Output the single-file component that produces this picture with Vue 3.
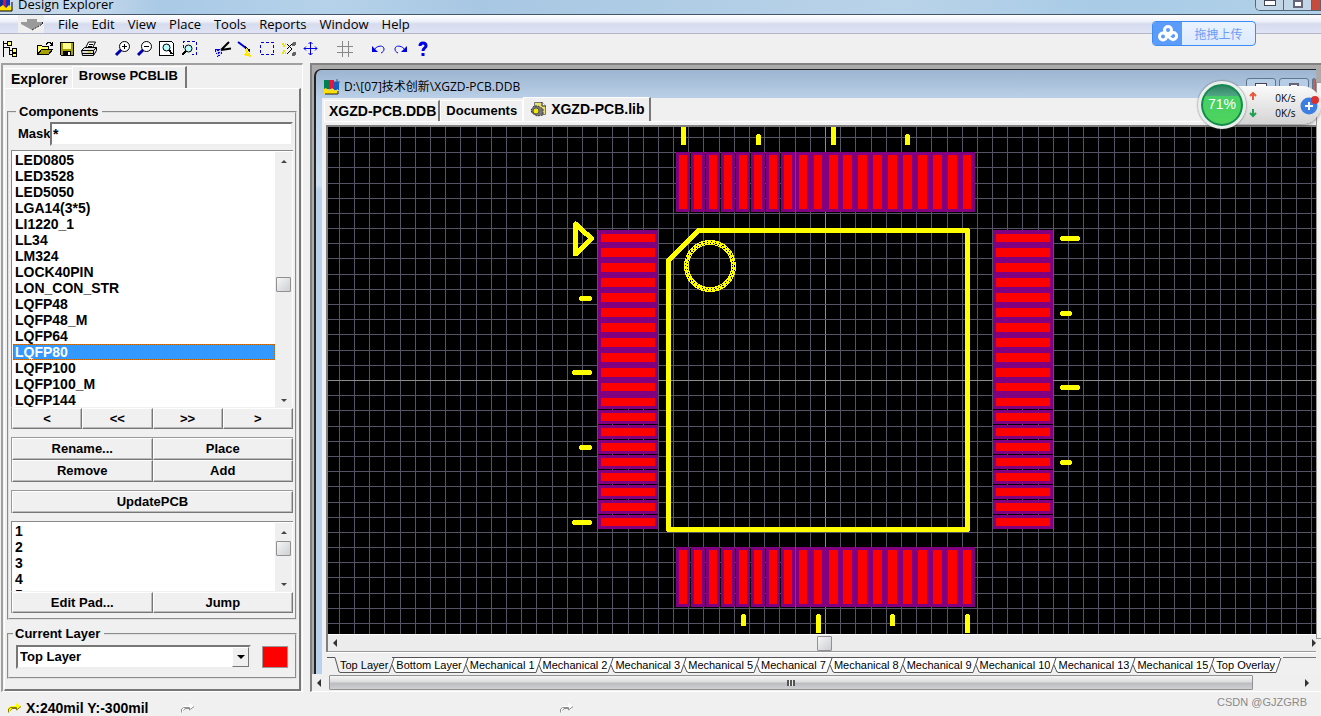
<script setup>
import { ref } from 'vue'

const menus = ['File', 'Edit', 'View', 'Place', 'Tools', 'Reports', 'Window', 'Help']
const toolGroups = [
  ['tree'],
  ['open', 'save', 'print'],
  ['zoomin', 'zoomout', 'zoompage', 'zoomarea'],
  ['cut', 'wire', 'select', 'break', 'move'],
  ['grid'],
  ['undo', 'redo', 'help'],
]
const components = [
  'LED0805', 'LED3528', 'LED5050', 'LGA14(3*5)', 'LI1220_1', 'LL34', 'LM324', 'LOCK40PIN',
  'LON_CON_STR', 'LQFP48', 'LQFP48_M', 'LQFP64', 'LQFP80', 'LQFP100', 'LQFP100_M', 'LQFP144',
]
const selected = ref('LQFP80')
const mask = ref('*')
const pads = ['1', '2', '3', '4', '5']
const layers = [
  'Top Layer', 'Bottom Layer', 'Mechanical 1', 'Mechanical 2', 'Mechanical 3', 'Mechanical 5',
  'Mechanical 7', 'Mechanical 8', 'Mechanical 9', 'Mechanical 10', 'Mechanical 13',
  'Mechanical 15', 'Top Overlay',
]
const layer = ref('Top Layer')

const range = (a, b) => Array.from({ length: b - a + 1 }, (_, i) => a + i)
const gridX = range(-32, 32).map((k) => Math.round(825 + k * 15.19))
const gridY = range(-16, 16).map((k) => Math.round(380 + k * 15.19))
const columnPads = range(0, 19).map((i) => ({ x: Math.round(679 + 14.95 * i), w: i < 8 ? 14 : i < 19 ? 16 : 15 }))
const rowPads = range(0, 19).map((i) => ({
  y: Math.floor(234 + 14.95 * i),
  h: i > 0 && i < 10 ? 9 : 8,
  top: i === 0 ? 4 : 3,
  full: i < 11 ? 17 : 14,
}))
const ticks = [
  [683.5, 124, 683.5, 143], [758.5, 136.5, 758.5, 143], [833.5, 124, 833.5, 143], [907.5, 136.5, 907.5, 143],
  [743.5, 616.5, 743.5, 624], [818.5, 616.5, 818.5, 631], [892.5, 616.5, 892.5, 624], [967.5, 616.5, 967.5, 631],
  [581.5, 298.5, 589.5, 298.5], [574.5, 372.5, 589.5, 372.5], [581.5, 447.5, 589.5, 447.5], [574.5, 522.5, 589.5, 522.5],
  [1062.5, 238.5, 1077.5, 238.5], [1062.5, 313.5, 1069.5, 313.5], [1062.5, 387.5, 1077.5, 387.5], [1062.5, 462.5, 1069.5, 462.5],
]
</script>

<template>
  <div class="app">
    <header class="titlebar">
      <svg class="app-icon" width="13" height="12" viewBox="0 0 13 12">
        <path d="M0 0h3v8H0z" fill="#083090" /><path d="M3 0h3v8H3z" fill="#e01030" /><path d="M6 0h4v8H6z" fill="#1030c0" />
        <path d="M0 7l3-2 3 3 3-3 3 3v3H0z" fill="#ffe000" /><path d="M0 11h12V2" fill="none" stroke="#000" />
      </svg>
      <span class="app-title">Design Explorer</span>
      <div class="win-buttons">
        <button aria-label="Minimize"><i class="min"></i></button>
        <button aria-label="Restore"><i class="max"></i></button>
        <button class="close" aria-label="Close"></button>
      </div>
    </header>

    <nav class="menubar">
      <button class="sys" aria-label="System menu">
        <svg width="26" height="18" viewBox="0 0 26 18">
          <path d="M9 4h10v3h5v2l-10 6L3 9V7h6z" fill="#9a9a9a" />
          <path d="M24.500 7v2L14 15" fill="none" stroke="#222" stroke-dasharray="2 1" />
        </svg>
      </button>
      <button v-for="m in menus" :key="m">{{ m }}</button>
    </nav>

    <div class="toolbar">
      <div v-for="(g, gi) in toolGroups" :key="gi" class="tool-group">
        <button v-for="t in g" :key="t" :aria-label="t">
          <svg width="18" height="18" viewBox="0 0 18 18" fill="none" stroke="#000" shape-rendering="crispEdges">
            <template v-if="t === 'tree'">
              <path d="M1.500 1v16M2 3.500h4M2 7.500h6M7.500 8v6h3M7.500 10.500h2" />
              <path d="M5.500 1.500h4v4h-4zM10.500 8.500h4v4h-4zM10.500 13.500h4v3h-4z" fill="#ffff70" />
            </template>
            <template v-else-if="t === 'open'">
              <path d="M1.500 14.500v-9h4l1 1h6v3" fill="#ffff70" /><path d="M1.500 14.500l4-5h11l-4 5z" fill="#a8a000" />
              <path d="M10 4.500l2-2h2l2 2M16.500 2v3h-3" />
            </template>
            <template v-else-if="t === 'save'">
              <path d="M2.500 2.500h13v13h-12l-1-1z" fill="#a8a000" /><path d="M5 3h8v6H5z" fill="#ffff90" stroke="none" />
              <path d="M5 11h8v5H5z" fill="#000" stroke="none" /><path d="M10 12h2v3h-2z" fill="#fff" stroke="none" />
            </template>
            <g v-else-if="t === 'print'" shape-rendering="auto">
              <path d="M5.500 8l3-6h7l-3 6z" fill="#fff" /><path d="M9 4.500h4M8 6.500h4" />
              <path d="M1.500 10.500l3-3h12v3l-3 5h-11z" fill="#ddd" /><path d="M1.500 10.500h12v4.500M13.500 10.500l3-3M2 13.500h11" />
              <path d="M8 12h3" stroke="#c8c000" />
            </g>
            <template v-else-if="t === 'zoomin' || t === 'zoomout'">
              <circle cx="10.500" cy="6.500" r="5" fill="#fff" shape-rendering="auto" /><path d="M8 6.500h5" />
              <path v-if="t === 'zoomin'" d="M10.500 4v5" /><path d="M7 10l-5 5" stroke="#0000b0" stroke-width="3" shape-rendering="auto" />
            </template>
            <template v-else-if="t === 'zoompage'">
              <path d="M1.500 1.500h12l2 2v12h-14z" fill="#fff" /><circle cx="8.500" cy="7.500" r="3.500" fill="#bff" shape-rendering="auto" />
              <path d="M11 10l3 4" stroke-width="2" />
            </template>
            <template v-else-if="t === 'zoomarea'">
              <path d="M3.500 8V1.500h13v13H12" stroke="#0000d0" stroke-dasharray="3 2" />
              <circle cx="8.500" cy="8.500" r="3.500" fill="#bff" shape-rendering="auto" /><path d="M6 11l-4 4" stroke-width="2" />
            </template>
            <template v-else-if="t === 'cut'">
              <path d="M7 10l10-1.500M7 10l8-8" stroke-width="2" shape-rendering="auto" />
              <path d="M1 9l7 1-1 4-3 3zM3 9l3 5M5 9l-1 7" fill="#ccf" stroke="#0000e0" stroke-dasharray="2 1" />
            </template>
            <template v-else-if="t === 'wire'">
              <path d="M2 2l8 6" stroke="#0000d0" stroke-width="2" shape-rendering="auto" /><path d="M9 7l5 4" stroke-width="2" />
              <path d="M11 9l-2 2M12 11l-3 4M9 15h5M13 13l1 4" stroke="#ffe800" stroke-width="2" />
            </template>
            <path v-else-if="t === 'select'" d="M2.500 2.500h13v12h-13z" stroke="#0000e0" stroke-dasharray="3 2" />
            <template v-else-if="t === 'break'">
              <path d="M7 4l5 5-5 5M12 4l-5 5" shape-rendering="auto" />
              <path d="M2 4h4M3 6h3M2 13h4M3 11h3" stroke="#f0e000" stroke-width="2" stroke-dasharray="2 1" />
              <circle cx="14" cy="4" r="2" fill="#666" stroke="none" /><circle cx="14" cy="14" r="2" fill="#666" stroke="none" />
            </template>
            <g v-else-if="t === 'move'" stroke="#0000e8" shape-rendering="auto">
              <path d="M8.500 2v13M2 8.500h13M6.500 4l2-2 2 2M6.500 13l2 2 2-2M4 6.500l-2 2 2 2M13 6.500l2 2-2 2" />
            </g>
            <path v-else-if="t === 'grid'" d="M6.500 1v16M12.500 1v16M1 6.500h16M1 12.500h16" stroke="#888" />
            <g v-else-if="t === 'undo'" stroke="#0000e8" shape-rendering="auto">
              <path d="M4 10c3-5 10-5 10-1 0 2-1 3-3 4" /><path d="M2 6v6h6z" fill="#0000e8" stroke="none" />
            </g>
            <g v-else-if="t === 'redo'" stroke="#0000e8" shape-rendering="auto">
              <path d="M13 10c-3-5-10-5-10-1 0 2 1 3 3 4" /><path d="M15 6v6H9z" fill="#0000e8" stroke="none" />
            </g>
            <g v-else shape-rendering="auto" stroke="#0000e8">
              <path d="M6 6c0-4 6-4 6 0 0 2-3 2-3 5" stroke-width="3" /><path d="M9 13v3" stroke-width="3" />
            </g>
          </svg>
        </button>
      </div>
    </div>

    <main class="main">
      <aside class="panel">
        <div class="panel-tabs" role="tablist">
          <button role="tab">Explorer</button>
          <button role="tab" class="active" aria-selected="true">Browse PCBLIB</button>
        </div>
        <div class="page">
          <fieldset class="components">
            <legend>Components</legend>
            <div class="mask-row">
              <label for="mask">Mask</label>
              <input id="mask" v-model="mask" type="text" />
            </div>
            <div class="listbox grow">
              <ul role="listbox" aria-label="Components">
                <li v-for="c in components" :key="c" role="option" :aria-selected="c === selected" :class="{ sel: c === selected }" @click="selected = c">{{ c }}</li>
              </ul>
              <div class="vscroll"><i class="up"></i><span class="gap-a"></span><b></b><span class="gap-b"></span><i class="down"></i></div>
            </div>
            <div class="row tight"><button>&lt;</button><button>&lt;&lt;</button><button>&gt;&gt;</button><button>&gt;</button></div>
            <div class="row two"><button>Rename...</button><button>Place</button><button>Remove</button><button>Add</button></div>
            <div class="row one"><button>UpdatePCB</button></div>
            <div class="listbox short">
              <ul role="listbox" aria-label="Pads"><li v-for="p in pads" :key="p" role="option">{{ p }}</li></ul>
              <div class="vscroll"><i class="up"></i><b></b><span class="gap-b"></span><i class="down"></i></div>
            </div>
            <div class="row two tight"><button>Edit Pad...</button><button>Jump</button></div>
          </fieldset>
          <fieldset class="current">
            <legend>Current Layer</legend>
            <div class="layer-row">
              <div class="combo">
                <select v-model="layer" aria-label="Current Layer"><option v-for="l in layers" :key="l">{{ l }}</option></select>
                <span class="drop"><i></i></span>
              </div>
              <button class="swatch" aria-label="Layer colour"></button>
            </div>
          </fieldset>
        </div>
      </aside>

      <section class="mdi">
        <div class="mdi-row">
          <div class="child">
            <div class="child-title">
              <svg width="16" height="16" viewBox="0 0 16 16">
                <path d="M0 1h5v9H0z" fill="#008050" /><path d="M5 1h5v9H5z" fill="#f01040" /><path d="M10 3h5v8h-5z" fill="#1060c0" />
                <path d="M0 10l2-1 3 3 3-3 3 3 3-2v5H0z" fill="#ffe000" /><path d="M1 15h13v-3" fill="none" stroke="#222" />
                <path d="M13 0v6M10 3h6" stroke="#2060a0" />
              </svg>
              <span>D:\[07]技术创新\XGZD-PCB.DDB</span>
              <div class="child-buttons">
                <button aria-label="Minimize"><i class="min"></i></button>
                <button aria-label="Maximize"><i class="max"></i></button>
                <button class="close" aria-label="Close"></button>
              </div>
            </div>
            <div class="child-body">
              <div class="doc-tabs" role="tablist">
                <button role="tab">XGZD-PCB.DDB</button>
                <button role="tab" class="small">Documents</button>
                <button role="tab" class="active" aria-selected="true">
                  <svg width="17" height="16" viewBox="0 0 17 16">
                    <path d="M4.500 1.500h8l3 3v9h-11z" fill="#e8e070" stroke="#777" /><path d="M12 1v4h4" fill="#fff" stroke="#222" />
                    <path d="M1 9l3-4h4l5 3v6l-6 1-5-3z" fill="#777" stroke="#333" stroke-dasharray="2 1" />
                    <circle cx="6" cy="10" r="3" fill="#f0e800" stroke="#555" />
                  </svg>XGZD-PCB.lib
                </button>
              </div>
              <div class="editor">
                <svg class="board" viewBox="328 127 988 507" preserveAspectRatio="xMinYMin slice" shape-rendering="crispEdges">
                  <rect x="328" y="127" width="988" height="507" fill="#000" />
                  <rect v-for="x in gridX" :key="'x' + x" :x="x" y="127" width="1" height="507" :fill="x === 825 ? '#8c8c8c' : '#545464'" />
                  <rect v-for="y in gridY" :key="'y' + y" x="328" :y="y" width="988" height="1" :fill="y === 380 ? '#8c8c8c' : '#545464'" />
                  <g fill="#800080">
                    <template v-for="(p, i) in columnPads" :key="i">
                      <rect v-for="y in [152, 547]" :key="y" :x="p.x - 3" :y="y" :width="p.w" height="60" />
                    </template>
                    <template v-for="(p, i) in rowPads" :key="i">
                      <rect v-for="x in [598, 993]" :key="x" :x="x" :y="p.y - p.top" width="60" :height="p.full" />
                    </template>
                  </g>
                  <g fill="#f00">
                    <template v-for="(p, i) in columnPads" :key="i">
                      <rect v-for="y in [155, 550]" :key="y" :x="p.x" :y="y" :width="i > 9 && i < 19 ? 9 : 8" height="54" />
                    </template>
                    <template v-for="(p, i) in rowPads" :key="i">
                      <rect v-for="x in [601, 996]" :key="x" :x="x" :y="p.y" width="54" :height="p.h" />
                    </template>
                  </g>
                  <g fill="none" stroke="#ff0" stroke-width="5" stroke-linecap="round" stroke-linejoin="round">
                    <line v-for="(t, i) in ticks" :key="i" :x1="t[0]" :y1="t[1]" :x2="t[2]" :y2="t[3]" />
                    <path d="M668.500 260.500l30-30h269v299h-299z" />
                    <path d="M575.500 224v30l16-15.500z" />
                    <circle cx="710" cy="266" r="23.500" />
                  </g>
                  <circle cx="710" cy="266" r="24.500" fill="none" stroke="#000" stroke-dasharray="1 3" />
                  <circle cx="710" cy="266" r="22.500" fill="none" stroke="#000" stroke-dasharray="1 2" />
                </svg>
                <div class="hscroll"><i class="left"></i><span></span><b></b><span></span><i class="right"></i></div>
              </div>
              <div class="layer-tabs" role="tablist">
                <svg width="13" height="16" viewBox="0 0 13 16"><path d="M0 .5h8l4 14.500h1" fill="none" stroke="#555" /></svg>
                <template v-for="(l, i) in layers" :key="l">
                  <button role="tab" :class="{ current: i === 0 }" :aria-selected="i === 0">{{ l }}</button>
                  <svg width="8" height="16" viewBox="0 0 8 16">
                    <path v-if="i" d="M0 1h5L1 15H0z" fill="#fff" /><path v-if="i < 12" d="M5 1h3v14H7L4 8z" fill="#fff" />
                    <path v-if="i < 12" d="M4 .5h4M4 8l3 7h1" fill="none" stroke="#555" />
                    <path v-if="i" d="M0 .5h5" stroke="#555" />
                    <path d="M0 15.500h1L6 1" fill="none" stroke="#555" />
                  </svg>
                </template>
                <span class="rest"></span>
              </div>
            </div>
          </div>
          <div class="edge"></div>
        </div>
        <div class="mdi-scroll"><i class="left"></i><b><em></em></b><span></span><i class="right"></i></div>
      </section>
    </main>

    <footer class="status">
      <svg v-for="n in 3" :key="n" :class="'arrow arrow' + n" width="15" height="11" viewBox="0 0 15 11">
        <path d="M1 10V6l3-2h5V1l5 3-5 4V6H5l-2 4z" :fill="n === 1 ? '#ff0' : '#fff'" />
        <path d="M1.500 10.500V7l2-1.500h6V8L14 4.500M3.500 8.500l1.500-2h5" fill="none" :stroke="n === 1 ? '#857c00' : '#8f8f8f'" />
      </svg>
      <span class="coords">X:240mil Y:-300mil</span>
      <span class="mark">CSDN @GJZGRB</span>
    </footer>

    <button class="upload">
      <span class="cloud">
        <svg width="20" height="18" viewBox="0 0 20 18" fill="none" stroke="#fff" stroke-width="3">
          <circle cx="10" cy="5" r="3.500" /><circle cx="5" cy="11.500" r="3.500" /><path d="M8 9l4 4c4 4 8-1 6-4s-6-1-6 2" />
        </svg>
      </span>
      <span class="upload-text">拖拽上传</span>
    </button>

    <div class="meter">
      <div class="speeds">
        <svg width="8" height="26" viewBox="0 0 8 26" fill="none" stroke-width="2">
          <path d="M4 8V2M1 4l3-3 3 3" stroke="#e85a3c" /><path d="M4 17v6M1 21l3 3 3-3" stroke="#20a050" />
        </svg>
        <div><span>0K/s</span><span>0K/s</span></div>
        <svg width="20" height="24" viewBox="0 0 20 24">
          <circle cx="9" cy="13" r="8.500" fill="#3b7fe0" /><path d="M9 9v8M5 13h8" stroke="#fff" stroke-width="2" /><circle cx="15" cy="7" r="4" fill="#dc3030" />
        </svg>
      </div>
      <div class="ball">71%</div>
    </div>
  </div>
</template>

<style>
body { background: #f0f0f0; }
</style>

<style scoped>
* { box-sizing: border-box; }
button { font: inherit; color: inherit; border: 0; padding: 0; margin: 0; background: none; white-space: nowrap; }
svg { display: block; flex: none; }
.app { position: relative; display: flex; flex-direction: column; height: 100vh; overflow: hidden; background: #f0f0f0; color: #000; font: bold 14px/16px "Liberation Sans", Arial, "Noto Sans CJK SC", sans-serif; }

.titlebar { display: flex; height: 15px; flex: none; border-bottom: 1px solid #43566b; background: linear-gradient(90deg, #c8d9e9 0, #c2d7ea 100px, #a9c9e5 160px, #b6d2ea 330px, #a8c7e2 480px, #b9d3e9 900px, #a9cbe6 1100px, #b2d1e8); }
.app-title { margin-left: 5px; font: 13px/8px "Open Sans", sans-serif; }
.win-buttons { display: flex; margin-left: auto; height: 11px; border: 1px solid #53677c; border-width: 0 0 1px 1px; border-radius: 0 0 0 5px; overflow: hidden; }
.win-buttons button { display: flex; justify-content: center; width: 28px; border-right: 1px solid #53677c; background: #c3d6e7; }
.win-buttons .close { width: 9px; background: #c64b3b; }
.min { width: 12px; height: 6px; border: 1px solid #445; background: #fff; }
.max { width: 10px; height: 8px; border: 2px solid #667; background: #fff; }

.menubar { display: flex; height: 19px; flex: none; padding-left: 18px; background: linear-gradient(#fff, #eef1fa 35%, #d6dcee 50%, #dfe3f4); border-bottom: 1px solid #b3b5cb; font: 13px/19px "Open Sans", "Noto Sans", sans-serif; }
.menubar button { padding: 0 7px 0 6px; }
.menubar .sys { padding: 0; margin-right: 8px; background: #efefef; width: 26px; }
.toolbar { display: flex; gap: 12px; height: 29px; flex: none; align-items: center; }
.tool-group { display: flex; }
.tool-group button { display: flex; justify-content: center; width: 22px; }

.main { flex: 1; min-height: 0; display: flex; gap: 7px; }
.panel { display: flex; flex-direction: column; width: 302px; flex: none; margin-left: 1px; padding: 1px 1px 0; border: 2px solid #a0a0a0; border-right: 1px solid #fff; border-bottom: 1px solid #fff; }
.panel-tabs { display: flex; align-items: flex-end; height: 22px; }
.panel-tabs button { height: 20px; padding: 0 4px 0 6px; border-top: 1px solid #fff; border-left: 1px solid #fff; }
.panel-tabs .active { height: 22px; font-size: 13px; padding: 0 7px 3px 6px; border-right: 2px solid #777; }
.page { flex: 1; min-height: 0; display: flex; flex-direction: column; gap: 6px; padding: 15px 2px 10px; border: 1px solid #fff; border-right: 2px solid #777; border-bottom: 2px solid #777; }
fieldset { margin: 0; min-width: 0; border: 2px groove #e0e0e0; padding: 0 2px; }
legend { font-size: 13px; line-height: 16px; margin-left: 5px; padding: 0 4px 0 3px; }
.components { flex: 1; min-height: 0; display: flex; flex-direction: column; padding-bottom: 5px; }
.current legend { margin-left: 2px; padding-left: 2px; }
.mask-row { display: flex; height: 24px; flex: none; margin: 2px 0 4px; }
.mask-row label { width: 39px; padding-left: 7px; overflow: hidden; font-size: 13px; line-height: 24px; }
.mask-row input { flex: 1; min-width: 0; font: inherit; padding: 0 1px; border: 2px solid; border-color: #777 #eee #eee #777; background: #fff; outline: 0; }
.listbox { display: flex; min-height: 0; padding: 1px 1px 0; border-top: 1px solid #8a8a8a; border-left: 1px solid #8a8a8a; background: #fff; }
.grow { flex: 1 1 0; }
.short { height: 70px; flex: none; margin-top: 8px; }
.listbox ul { flex: 1; margin: 0; padding: 0; list-style: none; overflow: hidden; }
.listbox li { height: 16px; padding-left: 2px; }
.listbox .sel { background: #3399ff; color: #fff; outline: 1px dotted #c06000; outline-offset: -1px; }
.vscroll { display: flex; flex-direction: column; align-items: center; width: 17px; padding: 8px 0 5px; background: #efefef; }
.vscroll b { width: 15px; height: 15px; flex: none; }
.vscroll .up + b { margin-top: 7px; }
.vscroll b, .hscroll b { border: 1px solid #909090; border-radius: 1px; background: linear-gradient(135deg, #f6f6f6, #ccced2); }
.gap-a { flex: 113; }
.gap-b { flex: 106; }
.up, .down { border: 3px solid transparent; border-bottom: 3px solid #444; border-top: 0; }
.down { border-top: 3px solid #444; border-bottom: 0; }
.left, .right { border: 4px solid transparent; border-right: 4px solid #333; border-left: 0; }
.right { border-left: 4px solid #333; border-right: 0; }
.row { display: grid; grid-template-columns: repeat(4, 1fr); flex: none; margin-top: 8px; border-top: 1px solid #999; border-left: 1px solid #999; }
.row.tight { margin-top: 0; border-top-color: #f0f0f0; }
.row.two { grid-template-columns: repeat(2, 1fr); }
.row.one { grid-template-columns: 1fr; }
.row button { height: 22px; font-size: 13px; border: 1px solid; border-color: #fff #777 #777 #fff; box-shadow: inset -1px -1px #bbb; }
.row.tight button { height: 21px; }
.layer-row { display: flex; align-items: center; gap: 11px; padding: 3px 5px 8px; }
.combo { position: relative; flex: 1; height: 24px; border: 2px solid; border-color: #777 #eee #eee #777; background: #fff; }
.combo select { appearance: none; width: 100%; height: 100%; border: 0; padding: 0 2px; background: #fff; font: inherit; font-size: 13px; color: #000; outline: 0; }
.drop { position: absolute; top: 0; right: 0; bottom: 0; width: 17px; display: flex; align-items: center; justify-content: center; pointer-events: none; background: #f0f0f0; border: 1px solid #777; border-top-color: #fff; border-left-color: #fff; }
.drop i { border: 4px solid transparent; border-top-color: #000; border-bottom: 0; }
.swatch { width: 26px; height: 22px; background: #f00; border: 1px solid #999; }

.mdi { flex: 1; min-width: 0; display: flex; flex-direction: column; border: 2px solid #828282; border-right: 0; border-bottom: 1px solid #fff; background: #ababab; }
.mdi-row { flex: 1; min-height: 0; display: flex; }
.child { flex: 1; min-width: 0; display: flex; flex-direction: column; margin: 4px 0 0 2px; padding-left: 6px; border: 1px solid #222; border-left-width: 2px; border-right: 0; border-bottom: 0; border-radius: 7px 0 0 0; background: linear-gradient(#9db5d1, #bcd1e9 30px, #cfe0f3 115px, #b9d1ea 120px); }
.child-title { display: flex; align-items: center; gap: 4px; height: 28px; flex: none; padding: 5px 0 0 2px; font: 12px/16px "Open Sans", "Noto Sans CJK SC", sans-serif; }
.child-buttons { display: flex; gap: 3px; align-self: flex-end; margin-left: auto; }
.child-buttons button { display: flex; justify-content: center; width: 30px; height: 20px; padding-top: 4px; border: 1px solid #60768d; border-radius: 3px; background: #b6cde5; }
.child-buttons .close { width: 4px; background: #b66; }
.child-body { flex: 1; min-height: 0; display: flex; flex-direction: column; padding-left: 2px; background: #f0f0f0; }
.doc-tabs { display: flex; align-items: flex-end; height: 24px; flex: none; border-bottom: 1px solid #fff; }
.doc-tabs button { display: flex; align-items: center; height: 21px; padding: 0 2px 0 4px; border: 1px solid #fff; border-bottom: 0; border-right: 2px solid #777; }
.doc-tabs .small { font-size: 13px; padding: 0 5px; border-right: 1px solid #fff; }
.doc-tabs .active { height: 24px; gap: 4px; padding: 0 5px 2px 6px; border-right: 2px solid #777; }
.editor { flex: 1; min-height: 0; display: flex; flex-direction: column; margin: 3px 0 0 2px; border-top: 2px solid #808080; border-left: 2px solid #808080; }
.board { width: 100%; flex: 1; min-height: 0; }
.hscroll { display: flex; align-items: center; height: 18px; flex: none; padding: 0 0 0 5px; border-top: 1px solid #fff; border-bottom: 1px solid #999; background: #ececec; }
.hscroll span { flex: 1; }
.hscroll b { width: 15px; height: 15px; }
.layer-tabs { display: flex; height: 22px; flex: none; padding-top: 4px; margin-left: 3px; border-top: 1px solid #fff; font: 11px/14px "Liberation Sans", Arial, sans-serif; }
.layer-tabs button { height: 16px; border-top: 1px solid #555; border-bottom: 1px solid #555; background: #fff; }
.layer-tabs .current { border-top-color: transparent; background: #f0f0f0; }
.rest { flex: 1; height: 1px; background: #777; }
.edge { width: 5px; margin-top: 17px; margin-bottom: 35px; background: #f4f4f4; border: 1px solid #999; border-right: 0; box-shadow: 0 36px #f0f0f0; }
.mdi-scroll { display: flex; align-items: center; gap: 8px; height: 17px; flex: none; padding: 0 12px 0 5px; background: #efefef; }
.mdi-scroll b { display: flex; flex: 926; align-items: center; justify-content: center; height: 15px; border: 1px solid #929292; border-radius: 1px; background: linear-gradient(#f6f6f6, #dcdcde 45%, #bcbdc1 55%, #d0d0d4); }
.mdi-scroll em { width: 8px; height: 6px; background: repeating-linear-gradient(90deg, #555 0 2px, #eee 2px 3px); }
.mdi-scroll span { flex: 36; }

.status { display: flex; align-items: center; position: relative; height: 24px; flex: none; padding: 8px 14px 0 26px; }
.arrow { position: absolute; top: 10px; left: 7px; }
.arrow2 { left: 180px; }
.arrow3 { left: 559px; }
.mark { margin-left: auto; padding-bottom: 12px; font: 11px/14px "Liberation Sans", Arial, sans-serif; color: #8a8a8a; }

.upload { position: absolute; top: 21px; right: 65px; display: flex; width: 104px; height: 25px; border: 1px solid #3b8cf5; border-radius: 4px; overflow: hidden; background: linear-gradient(#eaf3ff, #dceafd); }
.cloud { display: flex; align-items: center; justify-content: center; width: 29px; height: 100%; background: #5b9cfb; }
.upload-text { flex: 1; font: 12px/23px "Noto Sans CJK SC", sans-serif; color: #6c9cf8; }
.meter { position: absolute; top: 80px; right: 0; display: flex; align-items: center; width: 123px; height: 50px; }
.speeds { display: flex; align-items: center; justify-content: space-between; flex: 1; height: 38px; margin-left: 24px; padding: 0 1px 0 27px; border-radius: 0 19px 19px 0; background: linear-gradient(#fafafa, #d4d4d4); box-shadow: 0 2px 3px #0005; }
.speeds div { display: flex; flex-direction: column; padding: 2px 0 0 14px; font: 10px/15px "Open Sans", sans-serif; }
.ball { position: absolute; left: 0; top: 1px; width: 48px; height: 48px; border: 3px solid #e8eeea; border-radius: 50%; background: linear-gradient(#2b7f60 0, #4fa584 28%, #45d065 30%, #4fd45c); box-shadow: inset 0 0 0 2px #138a50, 0 0 2px #444; color: #fff; text-align: center; font: 14px/40px "Liberation Sans", Arial, sans-serif; }
</style>
